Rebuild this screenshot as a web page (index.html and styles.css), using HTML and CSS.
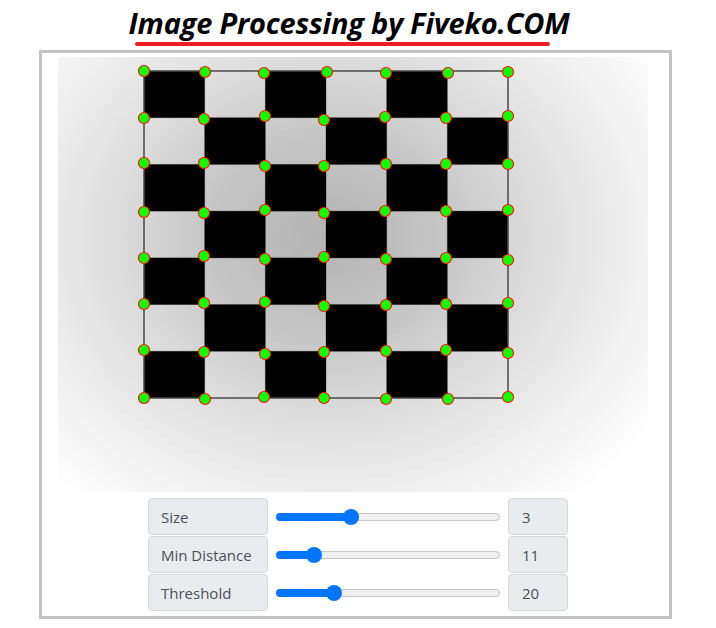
FILE: index.html
```html
<!DOCTYPE html>
<html lang="en">
<head>
<meta charset="UTF-8">
<meta name="viewport" content="width=device-width, initial-scale=1.0">
<title>Image Processing by Fiveko.COM</title>
<link rel="stylesheet" href="styles.css">
</head>
<body>

<div class="header">
  <h1 class="title">Image Processing by Fiveko.COM</h1>
  <div class="underline"></div>
</div>

<div class="frame">
  <div class="canvas">
    <svg width="590" height="435" viewBox="58 57 590 435">
      <defs>
        <pattern id="checker" patternUnits="userSpaceOnUse" x="144" y="71" width="121.333" height="93.429">
          <rect x="0" y="0" width="60.667" height="46.714" fill="#000"/>
          <rect x="60.667" y="46.714" width="60.667" height="46.714" fill="#000"/>
        </pattern>
      </defs>
      <rect x="144" y="71" width="364" height="327" fill="url(#checker)"/>
      <g stroke="rgba(0,0,0,0.3)" stroke-width="1">
        <line x1="204.67" y1="71" x2="204.67" y2="398"/>
        <line x1="265.33" y1="71" x2="265.33" y2="398"/>
        <line x1="326" y1="71" x2="326" y2="398"/>
        <line x1="386.67" y1="71" x2="386.67" y2="398"/>
        <line x1="447.33" y1="71" x2="447.33" y2="398"/>
        <line x1="144" y1="117.71" x2="508" y2="117.71"/>
        <line x1="144" y1="164.43" x2="508" y2="164.43"/>
        <line x1="144" y1="211.14" x2="508" y2="211.14"/>
        <line x1="144" y1="257.86" x2="508" y2="257.86"/>
        <line x1="144" y1="304.57" x2="508" y2="304.57"/>
        <line x1="144" y1="351.29" x2="508" y2="351.29"/>
      </g>
      <rect x="144" y="71" width="364" height="327" fill="none" stroke="#4a4a4a" stroke-width="1.5"/>
      <g class="corners">
        <circle cx="144" cy="71" r="5.5"/><circle cx="205" cy="72" r="5.5"/><circle cx="264" cy="73" r="5.5"/><circle cx="327" cy="72" r="5.5"/><circle cx="386" cy="73" r="5.5"/><circle cx="448" cy="73" r="5.5"/><circle cx="508" cy="72" r="5.5"/>
        <circle cx="144" cy="118" r="5.5"/><circle cx="204" cy="119" r="5.5"/><circle cx="265" cy="116" r="5.5"/><circle cx="324" cy="120" r="5.5"/><circle cx="385" cy="117" r="5.5"/><circle cx="446" cy="118" r="5.5"/><circle cx="508" cy="116" r="5.5"/>
        <circle cx="144" cy="163" r="5.5"/><circle cx="204" cy="163" r="5.5"/><circle cx="265" cy="166" r="5.5"/><circle cx="324" cy="166" r="5.5"/><circle cx="386" cy="164" r="5.5"/><circle cx="446" cy="164" r="5.5"/><circle cx="508" cy="164" r="5.5"/>
        <circle cx="144" cy="212" r="5.5"/><circle cx="204" cy="213" r="5.5"/><circle cx="265" cy="210" r="5.5"/><circle cx="324" cy="213" r="5.5"/><circle cx="385" cy="211" r="5.5"/><circle cx="446" cy="211" r="5.5"/><circle cx="508" cy="210" r="5.5"/>
        <circle cx="144" cy="258" r="5.5"/><circle cx="204" cy="256" r="5.5"/><circle cx="265" cy="259" r="5.5"/><circle cx="324" cy="257" r="5.5"/><circle cx="386" cy="259" r="5.5"/><circle cx="446" cy="258" r="5.5"/><circle cx="508" cy="260" r="5.5"/>
        <circle cx="144" cy="304" r="5.5"/><circle cx="204" cy="303" r="5.5"/><circle cx="265" cy="302" r="5.5"/><circle cx="324" cy="306" r="5.5"/><circle cx="386" cy="305" r="5.5"/><circle cx="446" cy="304" r="5.5"/><circle cx="508" cy="303" r="5.5"/>
        <circle cx="144" cy="350" r="5.5"/><circle cx="204" cy="352" r="5.5"/><circle cx="265" cy="354" r="5.5"/><circle cx="324" cy="352" r="5.5"/><circle cx="386" cy="351" r="5.5"/><circle cx="446" cy="350" r="5.5"/><circle cx="508" cy="353" r="5.5"/>
        <circle cx="144" cy="398" r="5.5"/><circle cx="205" cy="399" r="5.5"/><circle cx="264" cy="397" r="5.5"/><circle cx="324" cy="398" r="5.5"/><circle cx="386" cy="399" r="5.5"/><circle cx="448" cy="399" r="5.5"/><circle cx="508" cy="397" r="5.5"/>
      </g>
    </svg>
  </div>

  <div class="controls">
    <div class="control-row">
      <span class="label-box">Size</span>
      <div class="slider">
        <div class="fill" style="width:33.5%"></div>
        <div class="thumb" style="left:33.5%"></div>
      </div>
      <span class="value-box">3</span>
    </div>
    <div class="control-row">
      <span class="label-box">Min Distance</span>
      <div class="slider">
        <div class="fill" style="width:16.5%"></div>
        <div class="thumb" style="left:16.5%"></div>
      </div>
      <span class="value-box">11</span>
    </div>
    <div class="control-row">
      <span class="label-box">Threshold</span>
      <div class="slider">
        <div class="fill" style="width:25.5%"></div>
        <div class="thumb" style="left:25.5%"></div>
      </div>
      <span class="value-box">20</span>
    </div>
  </div>
</div>

</body>
</html>
```

FILE: styles.css
```css
body {
  margin: 0;
  background: #fff;
  font-family: "Open Sans", Arial, sans-serif;
}

.header {
  display: flex;
  flex-direction: column;
  align-items: center;
  padding-top: 5px;
  padding-right: 18px;
}

.title {
  margin: 0;
  font-size: 29px;
  line-height: 36px;
  font-weight: 700;
  font-style: italic;
  letter-spacing: -0.2px;
  color: #000;
}

.underline {
  width: 415px;
  height: 4px;
  margin-top: 1px;
  margin-right: 14px;
  background: #ed1c24;
  border-radius: 2px;
}

.frame {
  box-sizing: border-box;
  width: 633px;
  height: 569px;
  margin: 4px 0 0 39px;
  border: 3px solid #c3c3c3;
}

.canvas {
  width: 590px;
  height: 435px;
  margin: 4px 0 0 16px;
  background: radial-gradient(ellipse 400px 340px at 268px 180px, #b3b3b3 0%, #c6c6c6 30%, #dcdcdc 52%, #ececec 72%, #f7f7f7 88%, #fff 100%);
}

.canvas svg {
  display: block;
}

.corners circle {
  fill: #11ff00;
  stroke: #ff1010;
  stroke-width: 1.2;
}

.controls {
  display: flex;
  flex-direction: column;
  margin: 6px 0 0 106px;
}

.control-row {
  display: flex;
  align-items: center;
  height: 38px;
}

.label-box, .value-box {
  box-sizing: border-box;
  height: 37px;
  align-self: flex-start;
  display: flex;
  align-items: center;
  background: #e9ecef;
  border: 1px solid #d5d9dd;
  border-radius: 4px;
  color: #495057;
  font-size: 15px;
}

.label-box {
  width: 120px;
  padding-left: 12px;
}

.value-box {
  width: 60px;
  padding-left: 13px;
}

.slider {
  position: relative;
  width: 224px;
  height: 8px;
  margin: 0 8px;
  box-sizing: border-box;
  border: 1px solid #c8c8c8;
  border-radius: 4px;
  background: #efefef;
}

.fill {
  position: absolute;
  left: -1px;
  top: -1px;
  height: 8px;
  border-radius: 4px;
  background: #0075ff;
}

.thumb {
  position: absolute;
  top: 50%;
  width: 16px;
  height: 16px;
  margin: -8px 0 0 -8px;
  border-radius: 50%;
  background: #0075ff;
}
```
